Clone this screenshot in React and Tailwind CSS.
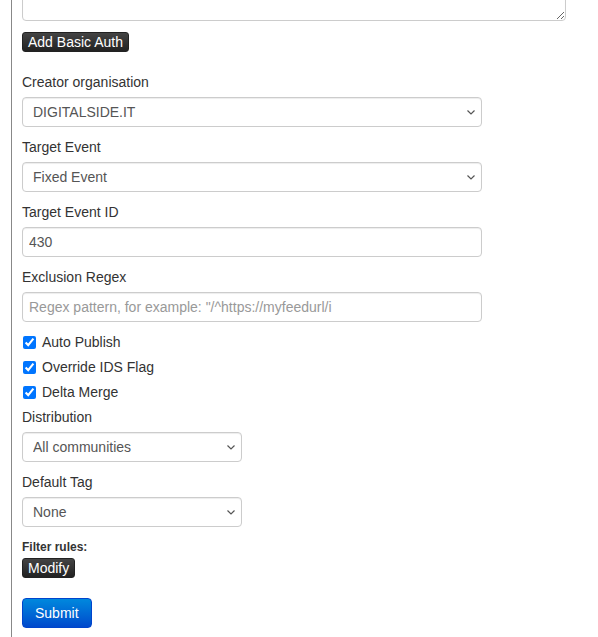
import React from 'react';

const selectCls =
  'block h-[30px] w-full appearance-none rounded-[4px] border border-[#ccc] bg-white py-[4px] pl-[10px] pr-[24px] text-[14px] text-[#555] shadow-[inset_0_1px_1px_rgba(0,0,0,0.075)]';

const inputCls =
  'block h-[30px] w-[460px] rounded-[4px] border border-[#ccc] bg-white py-[4px] px-[6px] text-[14px] text-[#555] placeholder:text-[#999] shadow-[inset_0_1px_1px_rgba(0,0,0,0.075)] outline-none';

const Label = ({ children }) => <label className="mb-[5px] block h-[20px] leading-[20px]">{children}</label>;

const Chevron = () => (
  <svg
    className="pointer-events-none absolute right-[7px] top-[13px]"
    width="8"
    height="5"
    viewBox="0 0 8 5"
    fill="none"
    stroke="#555"
    strokeWidth="1.2"
  >
    <path d="M0.5 0.5l3.5 3.5 3.5-3.5" />
  </svg>
);

const SelectField = ({ label, options, width = 'w-[460px]' }) => (
  <div className="mb-[10px]">
    <Label>{label}</Label>
    <div className={`relative ${width}`}>
      <select className={selectCls} defaultValue={options[0]}>
        {options.map((o) => (
          <option key={o}>{o}</option>
        ))}
      </select>
      <Chevron />
    </div>
  </div>
);

const Check = ({ label }) => (
  <label className="mb-[5px] flex h-[20px] items-center">
    <input type="checkbox" defaultChecked className="ml-[1px] mr-[6px] h-[13px] w-[13px] accent-[#0075ff]" />
    <span>{label}</span>
  </label>
);

const DarkButton = ({ children }) => (
  <button className="h-[20px] rounded-[3px] border border-[#222] bg-gradient-to-b from-[#444] to-[#222] px-[5px] text-[14px] leading-[18px] text-white">
    {children}
  </button>
);

export default function App() {
  return (
    <div className="min-h-screen overflow-hidden bg-white font-['Liberation_Sans',Arial,sans-serif] text-[14px] leading-[20px] text-[#333]">
      <div className="ml-[11px] flow-root min-h-screen border-l border-[#888] pl-[10px]">
        <textarea className="-mt-[40px] block h-[61px] w-[544px] rounded-[4px] border border-[#ccc] bg-white shadow-[inset_0_1px_1px_rgba(0,0,0,0.075)]" />
        <div className="mt-[11px]">
          <DarkButton>Add Basic Auth</DarkButton>
        </div>

        <div className="mt-[20px]">
          <SelectField label="Creator organisation" options={['DIGITALSIDE.IT']} />
          <SelectField label="Target Event" options={['Fixed Event', 'New Event Each Pull']} />

          <div className="mb-[10px]">
            <Label>Target Event ID</Label>
            <input className={inputCls} defaultValue="430" />
          </div>

          <div className="mb-[10px]">
            <Label>Exclusion Regex</Label>
            <input className={inputCls} placeholder={'Regex pattern, for example: "/^https://myfeedurl/i'} />
          </div>

          <Check label="Auto Publish" />
          <Check label="Override IDS Flag" />
          <Check label="Delta Merge" />

          <SelectField
            label="Distribution"
            width="w-[220px]"
            options={['All communities', 'Your organisation only', 'This community only', 'Connected communities']}
          />
          <SelectField label="Default Tag" width="w-[220px]" options={['None']} />

          <div className="h-[20px] text-[12px] font-bold leading-[20px]">Filter rules:</div>
          <div className="mt-[1px]">
            <DarkButton>Modify</DarkButton>
          </div>

          <button className="mt-[20px] h-[30px] rounded-[4px] border border-[#0044cc] bg-gradient-to-b from-[#0088dd] to-[#0048cc] px-[12px] text-[14px] text-white">
            Submit
          </button>
        </div>
      </div>
    </div>
  );
}
